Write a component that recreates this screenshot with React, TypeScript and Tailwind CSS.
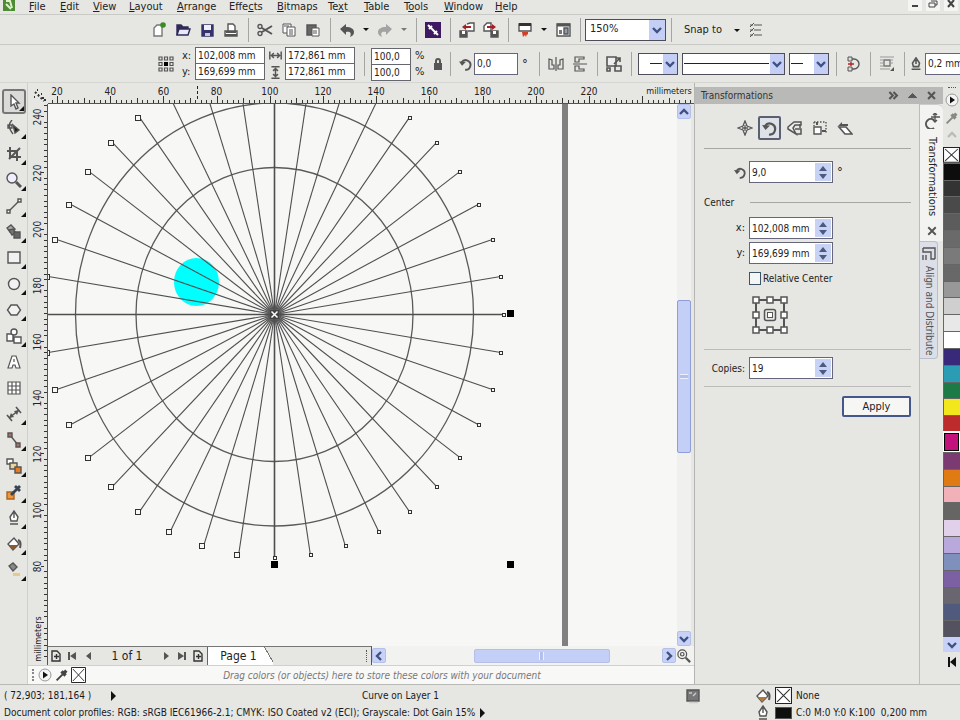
import type { ReactNode } from 'react';

const menus = ['File', 'Edit', 'View', 'Layout', 'Arrange', 'Effects', 'Bitmaps', 'Text', 'Table', 'Tools', 'Window', 'Help'];
const menuWidths = [
  'w-[31px]', 'w-[33px]', 'w-[36px]', 'w-[48px]', 'w-[52px]', 'w-[48px]',
  'w-[51px]', 'w-[36px]', 'w-[40px]', 'w-[40px]', 'w-[51px]', 'w-[30px]',
];
// index of the underlined letter
const menuKeys = [0, 0, 0, 0, 0, 4, 0, 2, 0, 1, 0, 0];

const palette = [
  'bg-[#0d0d0d]', 'bg-[#333333]', 'bg-[#4a4a4a]', 'bg-[#5c5c5c]', 'bg-[#6a6a6a]',
  'bg-[#7a7a7a]', 'bg-[#686868]', 'bg-[#989898]', 'bg-[#cfcfcf]', 'bg-[#e8e8e8]',
  'bg-white', 'bg-[#38297a]', 'bg-[#2a9db4]', 'bg-[#1c7a46]', 'bg-[#f2e61c]',
  'bg-[#bd2b2d]', 'bg-[#c4127c]', 'bg-[#7b3b72]', 'bg-[#e07b14]', 'bg-[#f2b0b8]',
  'bg-[#666564]', 'bg-[#e0d0ea]', 'bg-[#b8a8dc]', 'bg-[#8090bc]', 'bg-[#7c60a4]',
  'bg-[#6a6670]', 'bg-[#505a7c]', 'bg-[#555260]',
];

type IconProps = { children: ReactNode; size?: number; className?: string };

function Icon({ children, size = 16, className = '' }: IconProps) {
  return (
    <svg
      width={size}
      height={size}
      viewBox="0 0 16 16"
      fill="none"
      stroke="#555"
      strokeWidth="1.4"
      className={'shrink-0 ' + className}
      aria-hidden="true"
    >
      {children}
    </svg>
  );
}

function Caret({ color = '#111' }: { color?: string }) {
  return (
    <svg width="6" height="3" viewBox="0 0 6 3" aria-hidden="true">
      <path d="M0 0h6L3 3z" fill={color} />
    </svg>
  );
}

function Chevron({ dir = 'down', color = '#3f5183' }: { dir?: 'down' | 'up' | 'left' | 'right'; color?: string }) {
  const d = {
    down: 'M1 3l4 4 4-4',
    up: 'M1 7l4-4 4 4',
    left: 'M7 1L3 5l4 4',
    right: 'M3 1l4 4-4 4',
  }[dir];
  return (
    <svg width="10" height="10" viewBox="0 0 10 10" aria-hidden="true">
      <path d={d} fill="none" stroke={color} strokeWidth="2.4" />
    </svg>
  );
}

function ToolButton({ label, children }: { label: string; children: ReactNode }) {
  return (
    <button aria-label={label} className="flex h-6 w-6 shrink-0 items-center justify-center">
      {children}
    </button>
  );
}

function DropButton({ label, color }: { label: string; color?: string }) {
  return (
    <button aria-label={label} className="flex h-6 w-[14px] shrink-0 items-center justify-center">
      <Caret color={color} />
    </button>
  );
}

function Sep() {
  return (
    <div className="flex w-[10px] shrink-0 justify-center">
      <div className="h-6 w-px bg-[#a5a5a3]" />
    </div>
  );
}

function RotateIcon({ size = 14 }: { size?: number }) {
  return (
    <Icon size={size}>
      <path d="M3 6a5.500 5.500 0 1 1 4 8.500" strokeWidth="2.200" />
      <path d="M0 5l3.500 5L8 5.500z" fill="#555" stroke="none" />
    </Icon>
  );
}

function MenuBar() {
  return (
    <header className="flex h-[15px] shrink-0 items-start border-b border-[#c9c9c6]">
      <svg width="14" height="11" viewBox="0 0 14 11" className="mr-3 ml-[3px] shrink-0" aria-hidden="true">
        <path d="M0 0h12v11H0z" fill="#4e8b35" />
        <path d="M3 1h4l2 7M3 4l5 5" fill="none" stroke="#dff0cc" strokeWidth="2" />
      </svg>
      <nav className="flex grow text-[11px] leading-[13px]">
        {menus.map((name, i) => (
          <button key={name} className={menuWidths[i] + ' shrink-0 text-left whitespace-nowrap'}>
            {name.slice(0, menuKeys[i])}
            <span className="underline">{name[menuKeys[i]]}</span>
            {name.slice(menuKeys[i] + 1)}
          </button>
        ))}
      </nav>
      <div className="flex shrink-0 gap-1 pr-[2px]">
        <button aria-label="Minimize" className="h-[11px] w-[14px] bg-[#f4f4f2]">
          <svg width="14" height="11"><path d="M4 6h6" stroke="#444" strokeWidth="2" /></svg>
        </button>
        <button aria-label="Restore" className="h-[11px] w-[14px] bg-[#f4f4f2]">
          <svg width="14" height="11"><path d="M3 3h6v4H3zM5 1h6v4H9" fill="none" stroke="#444" strokeWidth="1" /></svg>
        </button>
        <button aria-label="Close" className="h-[11px] w-[14px] bg-[#f4f4f2]">
          <svg width="14" height="11"><path d="M4 0l6 7M10 0L4 7" stroke="#444" strokeWidth="2" /></svg>
        </button>
      </div>
    </header>
  );
}

function StandardBar() {
  return (
    <div className="flex h-[30px] shrink-0 items-center border-b border-[#c9c9c6] pl-[147px]">
      <ToolButton label="New">
        <Icon>
          <path d="M3 14V6l3-3h5v11z" fill="#fff" stroke="#777" />
          <circle cx="12" cy="3" r="2.800" fill="#3c8a22" stroke="none" />
        </Icon>
      </ToolButton>
      <ToolButton label="Open">
        <Icon>
          <path d="M2 13V3h4l2 2h5v2" fill="#2e2b55" stroke="#2e2b55" />
          <path d="M2 13l2-6h11l-2 6z" fill="#e8e8ff" stroke="#2e2b55" />
        </Icon>
      </ToolButton>
      <ToolButton label="Save">
        <Icon>
          <path d="M3 3h11v11H3z" fill="#35336b" stroke="#35336b" />
          <path d="M5 3h7v5H5z" fill="#f0f0fa" stroke="none" />
          <path d="M6 11h5v3H6z" fill="#c8c8da" stroke="none" />
        </Icon>
      </ToolButton>
      <ToolButton label="Print">
        <Icon>
          <path d="M5 10V2h5l2 2v6" fill="#fff" />
          <path d="M2 9h12v5H2z" fill="#fff" />
          <path d="M2 13h12M3 10h10" strokeWidth="2" />
        </Icon>
      </ToolButton>
      <Sep />
      <ToolButton label="Cut">
        <Icon>
          <path d="M5 6l10 6M5 10l10-6" strokeWidth="2" />
          <circle cx="3" cy="4.500" r="2" />
          <circle cx="3" cy="11.500" r="2" />
        </Icon>
      </ToolButton>
      <ToolButton label="Copy">
        <Icon>
          <path d="M2 2h8v9H2z" fill="#fff" strokeWidth="1" />
          <path d="M6 5h8v9H6z" fill="#fff" strokeWidth="1" />
          <path d="M8 8h4M8 10h4M8 12h4M3 4h5" strokeWidth="1" />
        </Icon>
      </ToolButton>
      <ToolButton label="Paste">
        <Icon>
          <path d="M2 3h9v10H2z" fill="#666" />
          <path d="M7 6h7v8H7z" fill="#fff" strokeWidth="1" />
          <path d="M8 9h4M8 11h4" strokeWidth="1" />
        </Icon>
      </ToolButton>
      <Sep />
      <ToolButton label="Undo">
        <Icon>
          <path d="M1 7l6-5v3c5 0 8 2 8 5 0 2-1 4-4 5 2-4 0-6-4-5v3z" fill="#555" stroke="none" />
        </Icon>
      </ToolButton>
      <DropButton label="Undo list" />
      <ToolButton label="Redo">
        <Icon>
          <path d="M15 7L9 2v3C4 5 1 7 1 10c0 2 1 4 4 5-2-4 0-6 4-5v3z" fill="#a3a3a3" stroke="none" />
        </Icon>
      </ToolButton>
      <DropButton label="Redo list" color="#777" />
      <Sep />
      <ToolButton label="Search content">
        <Icon>
          <path d="M0 0h16v16H0z" fill="#3f1a63" stroke="none" />
          <path d="M3 3l10 10M4 7l3-3M9 12l3-3" stroke="#fff" strokeWidth="2" />
        </Icon>
      </ToolButton>
      <Sep />
      <ToolButton label="Import">
        <Icon>
          <path d="M8 2l3-1h4v8H9" fill="#fff" />
          <path d="M1 9h7v6H1z" fill="#555" />
          <path d="M3 9h3v3H3z" fill="#fff" stroke="none" />
          <path d="M12 5H6" stroke="#a31f26" strokeWidth="2" />
          <path d="M7 2v6L3 5z" fill="#a31f26" stroke="none" />
        </Icon>
      </ToolButton>
      <ToolButton label="Export">
        <Icon>
          <path d="M1 9V4l3-3h4v8z" fill="#fff" />
          <path d="M8 9h7v6H8z" fill="#555" />
          <path d="M10 9h3v3h-3z" fill="#fff" stroke="none" />
          <path d="M4 5h6" stroke="#a31f26" strokeWidth="2" />
          <path d="M9 2v6l4-3z" fill="#a31f26" stroke="none" />
        </Icon>
      </ToolButton>
      <Sep />
      <ToolButton label="Application launcher">
        <Icon>
          <path d="M2 2h12v7H2z" fill="#fff" />
          <path d="M2 1h12v3H2z" fill="#333" stroke="none" />
          <path d="M5 10h6v3l-1-1-1 3-1-2-2 2z" fill="#d33f22" stroke="none" />
        </Icon>
      </ToolButton>
      <DropButton label="Launcher list" />
      <ToolButton label="Welcome screen">
        <Icon>
          <path d="M2 2h13v12H2z" fill="#fff" />
          <path d="M2 3h13" strokeWidth="3" />
          <path d="M4 8h3v4H4z" fill="#777" stroke="none" />
          <path d="M9 6h4v6H9z" fill="#8a9ab8" />
        </Icon>
      </ToolButton>
      <Sep />
      <div className="relative h-[22px] w-[81px] shrink-0">
        <select
          aria-label="Zoom level"
          className="block h-full w-full appearance-none border border-[#4d4d5c] bg-white pl-1 text-[11px] text-[#222]"
        >
          <option>150%</option>
        </select>
        <span className="pointer-events-none absolute top-px right-px flex h-5 w-4 items-center justify-center bg-[#c5cff5]">
          <Chevron />
        </span>
      </div>
      <Sep />
      <button className="ml-2 flex shrink-0 items-center gap-3 pt-px text-[11px] leading-4">
        Snap to <Caret />
      </button>
      <button aria-label="Options" className="ml-2 shrink-0">
        <Icon>
          <path d="M6 3h8M6 8h7M6 13h8M2 5l4-4M2 10l4-4M2 15l4-4M2 3h3M2 8h3M2 13h3" strokeWidth="1" />
        </Icon>
      </button>
    </div>
  );
}

const field = 'h-[17px] border border-[#66666e] bg-white px-[2px] text-[10px] text-[#222] outline-none';

function LinePicker({ label, width, inset }: { label: string; width: string; inset: string }) {
  return (
    <div className={'relative h-[22px] shrink-0 ' + width}>
      <select aria-label={label} className="block h-full w-full appearance-none border border-[#4d4d5c] bg-white" />
      <span className={'pointer-events-none absolute top-[10px] h-px bg-[#222] ' + inset} />
      <span className="pointer-events-none absolute top-px right-px flex h-5 w-[14px] items-center justify-center bg-[#c5cff5]">
        <Chevron />
      </span>
    </div>
  );
}

function PropertyBar() {
  return (
    <div className="flex h-[38px] shrink-0 items-center border-b border-[#d5d5d2] pl-[158px]">
      <Icon>
        <path d="M1 1h3v3H1zM6.500 1h3v3h-3zM12 1h3v3h-3zM1 6.500h3v3H1zM12 6.500h3v3h-3zM1 12h3v3H1zM6.500 12h3v3h-3zM12 12h3v3h-3z" strokeWidth="1.200" />
        <path d="M6 6h4v4H6z" fill="#000" stroke="none" />
      </Icon>
      <div className="ml-2 grid shrink-0 grid-cols-[13px_70px] items-center -space-y-px text-[11px] leading-4">
        <label htmlFor="pos-x">x:</label>
        <input id="pos-x" className={field} defaultValue="102,008 mm" />
        <label htmlFor="pos-y">y:</label>
        <input id="pos-y" className={field} defaultValue="169,699 mm" />
      </div>
      <div className="ml-1 grid shrink-0 grid-cols-[16px_70px] items-center -space-y-px">
        <Icon size={13}>
          <path d="M1 3v10M15 3v10M3 8h10M6 5L3 8l3 3M10 5l3 3-3 3" strokeWidth="1.800" />
        </Icon>
        <input aria-label="Width" className={field} defaultValue="172,861 mm" />
        <Icon size={13}>
          <path d="M3 1h10M3 15h10M8 3v10M5 6l3-3 3 3M5 10l3 3 3-3" strokeWidth="1.800" />
        </Icon>
        <input aria-label="Height" className={field} defaultValue="172,861 mm" />
      </div>
      <div className="ml-1"><Sep /></div>
      <div className="ml-[2px] grid shrink-0 grid-cols-[40px_14px] items-center gap-x-1 -space-y-px text-[11px] leading-4">
        <input aria-label="Scale horizontal" className={field} defaultValue="100,0" />
        <span>%</span>
        <input aria-label="Scale vertical" className={field} defaultValue="100,0" />
        <span>%</span>
      </div>
      <button aria-label="Lock ratio" className="ml-1 shrink-0">
        <svg width="10" height="12" viewBox="0 0 10 12">
          <path d="M1 5h8v7H1z" fill="#555" />
          <path d="M3 5V3a2 2 0 0 1 4 0v2" fill="none" stroke="#555" strokeWidth="2" />
        </svg>
      </button>
      <div className="ml-[2px]"><Sep /></div>
      <label htmlFor="angle" className="ml-1 shrink-0"><RotateIcon /></label>
      <input
        id="angle"
        aria-label="Angle of rotation"
        className="ml-px h-[22px] w-11 shrink-0 border border-[#66667a] bg-white px-[2px] text-[10px] text-[#222]"
        defaultValue="0,0"
      />
      <span className="ml-1 w-3 shrink-0 text-[13px] leading-4">°</span>
      <Sep />
      <ToolButton label="Mirror horizontally">
        <Icon>
          <path d="M1 3v10h5V9H4V4zM15 3v10h-5V9h2V4zM8 1v14" strokeWidth="1.200" />
        </Icon>
      </ToolButton>
      <ToolButton label="Mirror vertically">
        <Icon>
          <path d="M3 1h9v2H7v3H3zM3 15h9v-2H7v-3H3zM1 8h14" strokeWidth="1.200" />
        </Icon>
      </ToolButton>
      <Sep />
      <ToolButton label="Convert to curves">
        <Icon>
          <path d="M1 1h9v9H1z" fill="#eee" strokeWidth="1.600" />
          <path d="M1 12h3v3H1zM9 10h6v5H9zM8 8l6-6M10 2h4v4" strokeWidth="1.600" />
        </Icon>
      </ToolButton>
      <Sep />
      <div className="ml-[2px] flex shrink-0 gap-1">
        <LinePicker label="Start arrowhead" width="w-10" inset="right-4 w-3" />
        <LinePicker label="Line style" width="w-[103px]" inset="right-4 left-[2px]" />
        <LinePicker label="End arrowhead" width="w-10" inset="left-[2px] w-3" />
      </div>
      <div className="ml-[2px]"><Sep /></div>
      <ToolButton label="Close curve">
        <Icon>
          <path d="M4 3h5a5 5 0 0 1 0 10H4" strokeWidth="1.400" />
          <path d="M3 1h4v4H3zM3 11h4v4H3z" fill="#ddd" strokeWidth="1" />
          <path d="M3 8h6M6 6v4" stroke="#b22" />
        </Icon>
      </ToolButton>
      <Sep />
      <ToolButton label="Wrap text">
        <Icon>
          <path d="M1 1h14M1 4h3M1 7h3M1 10h3M1 13h10M12 4h2M12 7h2" stroke="#999" strokeWidth="1" />
          <path d="M5 4h6v6H5z" stroke="#777" />
          <path d="M11 15l4-4v4z" fill="#555" stroke="none" />
        </Icon>
      </ToolButton>
      <Sep />
      <label htmlFor="outline" className="mr-[2px] shrink-0">
        <Icon size={14}>
          <path d="M3 14h10M5 11h6l1-4-4-6-4 6zM8 3v5" strokeWidth="1.800" />
        </Icon>
      </label>
      <input
        id="outline"
        aria-label="Outline width"
        className="h-[22px] w-0 grow border border-r-0 border-[#66667a] bg-white pl-[2px] text-[10px] text-[#222]"
        defaultValue="0,2 mm"
      />
    </div>
  );
}

const tools: { name: string; flyout: boolean; art: ReactNode }[] = [
  { name: 'Pick', flyout: true, art: <path d="M5 1v11l3-2 2 5 2-1-2-5h3z" fill="#fff" /> },
  { name: 'Shape', flyout: true, art: <><path d="M6 0c-4 4-3 9 1 14M2 5h4v3H2z" /><path d="M7 5l6 5-4 3z" fill="#222" /></> },
  { name: 'Crop', flyout: true, art: <path d="M4 1v10h11M1 5h10v10M3 13L14 2" strokeWidth="2" /> },
  { name: 'Zoom', flyout: true, art: <><circle cx="6" cy="6" r="5" fill="#eef" /><path d="M10 10l5 5" strokeWidth="3" /></> },
  { name: 'Freehand', flyout: true, art: <><path d="M3 13L13 3" /><path d="M1 12h3v3H1zM12 1h3v3h-3z" fill="#fff" /></> },
  { name: 'Smart fill', flyout: true, art: <><path d="M1 4l4-3 4 4-5 3z" fill="#aaa" /><path d="M3 6l4-1 3 4-4 2z" fill="#777" /><path d="M8 8h6v6H8z" fill="#666" /></> },
  { name: 'Rectangle', flyout: true, art: <path d="M2 2h12v11H2z" fill="#f2f2f2" /> },
  { name: 'Ellipse', flyout: true, art: <circle cx="8" cy="8" r="5.500" fill="#f2f2f2" /> },
  { name: 'Polygon', flyout: true, art: <path d="M5 3h6l3.500 5L11 13H5L1.500 8z" fill="#f2f2f2" /> },
  { name: 'Basic shapes', flyout: true, art: <><path d="M1 6h6v7H1zM8 9h7v6H8z" fill="#fff" /><circle cx="8" cy="4" r="3" fill="#fff" /></> },
  { name: 'Text', flyout: false, art: <path d="M2 14L6 2h4l4 12h-4l-1-3H7l-1 3zM8 5v3" fill="#fff" strokeWidth="1.200" /> },
  { name: 'Table', flyout: false, art: <path d="M2 2h12v12H2zM2 6h12M2 10h12M6 2v12M10 2v12" fill="#fff" strokeWidth="1.200" /> },
  { name: 'Dimension', flyout: true, art: <><path d="M3 12l10-8M1 9l5 6M10 1l5 6" strokeWidth="1.600" /><path d="M3 12l2-5 3 4zM13 4l-2 5-3-4z" fill="#555" stroke="none" /></> },
  { name: 'Connector', flyout: true, art: <><path d="M4 3l8 10" /><path d="M2 1h4v4H2zM10 11h4v4h-4z" fill="#b86a5c" /></> },
  { name: 'Blend', flyout: true, art: <><path d="M1 1h6v5H1z" fill="#fff" /><path d="M4 5h7v6H4z" fill="#ecd59a" /><path d="M9 9h6v6H9z" fill="#ec7a18" /></> },
  { name: 'Eyedropper', flyout: true, art: <><path d="M1 8h7v7H1z" fill="#f0963c" stroke="#a96420" /><path d="M5 11l9-9M9 2l5 5" stroke="#3a4350" strokeWidth="2.800" /></> },
  { name: 'Outline', flyout: true, art: <path d="M4 14h8M5 11h6l1-4-4-6-4 6zM8 3v5" fill="#fff" /> },
  { name: 'Fill', flyout: true, art: <><path d="M2 8l6-6 5 6-6 6z" fill="#fff" /><path d="M3 9h9l-5 5z" fill="#8c5b2b" stroke="none" /><path d="M12 4c3 1 3 4 2 8" strokeWidth="2" /></> },
  { name: 'Interactive fill', flyout: true, art: <><path d="M3 4l4-3 4 4-4 4z" fill="#888" /><path d="M7 11h7v3H7z" fill="#e6cb87" stroke="none" /></> },
];

function Toolbox() {
  return (
    <aside className="flex w-7 shrink-0 flex-col items-center border-r border-[#cfcfcc] pt-[6px]">
      {tools.map((tool) => (
        <button
          key={tool.name}
          aria-label={tool.name}
          className={
            'relative flex h-[25px] w-6 shrink-0 items-center justify-center mb-px ' +
            (tool.name === 'Pick' ? 'rounded-[3px] border-2 border-[#777] bg-[#dadad9]' : '')
          }
        >
          <Icon>{tool.art}</Icon>
          {tool.flyout && (
            <svg width="5" height="5" className="absolute right-0 bottom-px" aria-hidden="true">
              <path d="M5 0v5H0z" fill="#111" />
            </svg>
          )}
        </button>
      ))}
    </aside>
  );
}

// Ruler scales: 20 mm are 53.2px across and 56.2px down at this zoom.
const hMajor = 53.2;
const vMajor = 56.2;

function HorizontalRuler() {
  const ticks = Array.from({ length: 121 }, (_, i) => i);
  return (
    <svg className="block h-[21px] w-full shrink-0" aria-hidden="true">
      <path d="M9 7h1M13 11h1M10 12h1M6 14h1M14 15h3v3M7 9l9 9" stroke="#333" strokeWidth="2" strokeDasharray="2 2" fill="none" />
      {ticks.map((i) => {
        const x = Math.round(29 + ((i - 1) * hMajor) / 10) + 0.5;
        const top = (i - 1) % 10 === 0 ? 13 : (i - 1) % 5 === 0 ? 15 : 17;
        return x < 20 ? null : <path key={i} d={`M${x} ${top}V20`} stroke="#333" />;
      })}
      {Array.from({ length: 11 }, (_, i) => (
        <text key={i} x={29 + i * hMajor} y="12" textAnchor="middle" fontSize="10" fill="#222">
          {20 + i * 20}
        </text>
      ))}
      <path d="M169.500 3v14" stroke="#222" strokeDasharray="3 2" />
      <path d="M20 20.500H680" stroke="#555" />
      <text x="641" y="11" textAnchor="middle" fontSize="9" fill="#222">millimeters</text>
    </svg>
  );
}

function VerticalRuler() {
  return (
    <svg className="block h-full w-[20px] shrink-0" aria-hidden="true">
      {Array.from({ length: 99 }, (_, i) => {
        const y = Math.round(1 + i * (vMajor / 10)) + 0.5;
        return <path key={i} d={`M${i % 10 === 2 ? 13 : 16} ${y}h3`} stroke="#333" />;
      })}
      {Array.from({ length: 9 }, (_, i) => {
        const y = 13 + i * vMajor;
        return (
          <text key={i} x="0" y="0" transform={`translate(13 ${y}) rotate(-90)`} textAnchor="middle" fontSize="10" fill="#222">
            {240 - i * 20}
          </text>
        );
      })}
      <text x="0" y="0" transform="translate(13 535) rotate(-90)" textAnchor="middle" fontSize="9" fill="#222">
        millimeters
      </text>
      <path d="M19.500 0V700" stroke="#555" />
    </svg>
  );
}

// Drawing centre and the reach of one spoke, in canvas pixels.
const cx = 226.5;
const cy = 210.5;
const spokes = Array.from({ length: 40 }, (_, i) => {
  const a = (i * 9 * Math.PI) / 180;
  return { x: cx + 229 * Math.cos(a), y: cy + 243 * Math.sin(a) };
});

function Drawing() {
  return (
    <svg className="absolute inset-0 h-full w-full" role="img" aria-label="Page with a wheel of rotated lines">
      <rect x="514" y="0" width="6" height="100%" fill="#808080" />
      <ellipse cx="148.500" cy="178" rx="22.500" ry="24" fill="#00ffff" />
      <g fill="none" stroke="#5a5a5a" strokeWidth="1.300">
        <ellipse cx={cx} cy={cy} rx="199" ry="211.500" />
        <ellipse cx={cx} cy={cy} rx="138.500" ry="147" />
      </g>
      {spokes.map((p, i) => (
        <path key={i} d={`M${cx} ${cy}L${p.x} ${p.y}`} stroke="#4f4f4f" strokeWidth={i % 10 === 0 ? 1.6 : 1.1} />
      ))}
      {spokes.map((p, i) => {
        // handles left of the centre hang off the outer side of the line end
        const left = p.x < cx - 10;
        const s = left ? 5 : 3;
        return (
          <rect
            key={i}
            x={Math.round(p.x - s / 2) + (left ? -1.5 : 0.5)}
            y={Math.round(p.y - s / 2) + 0.5}
            width={s}
            height={s}
            fill="#f8f8f7"
            stroke="#333"
          />
        );
      })}
      <circle cx={cx} cy={cy} r="10" fill="#555" fillOpacity="0.4" />
      <rect x="222" y="206" width="9" height="9" fill="#444" />
      <path d="M223.500 207.500l6 6M229.500 207.500l-6 6" stroke="#fff" strokeWidth="1.500" />
      <path d="M459 206h7v7h-7zM223 457h7v7h-7zM459 457h7v7h-7z" fill="#000" />
    </svg>
  );
}

function ScrollButton({ label, dir }: { label: string; dir: 'down' | 'up' | 'left' | 'right' }) {
  return (
    <button aria-label={label} className="flex h-[15px] w-[14px] shrink-0 items-center justify-center rounded-xs border border-[#b4c0ea] bg-[#c8d2f6]">
      <Chevron dir={dir} />
    </button>
  );
}

function NavIcon({ label, d, fill = true }: { label: string; d: string; fill?: boolean }) {
  return (
    <button aria-label={label} className="flex w-4 shrink-0 justify-center">
      <svg width="10" height="12" viewBox="0 0 10 12">
        <path d={d} fill={fill ? '#555' : 'none'} stroke={fill ? 'none' : '#333'} strokeWidth="1.400" />
      </svg>
    </button>
  );
}

const addPage = 'M1 1h5l3 3v7H1zM3 6.500h5M5.500 4v5';

function PageBar() {
  return (
    <div className="flex h-[19px] shrink-0 items-center bg-[#f2f2f1]">
      <div className="flex h-full grow items-center border-t border-[#777] bg-[#e6e6e3]">
        <NavIcon label="Add page before" d={addPage} fill={false} />
        <NavIcon label="First page" d="M1 2h2v8H1zM9 2v8L3 6z" />
        <NavIcon label="Previous page" d="M8 2v8L3 6z" />
        <span className="w-[62px] shrink-0 text-center text-[12px]">1 of 1</span>
        <NavIcon label="Next page" d="M3 2v8l5-4z" />
        <NavIcon label="Last page" d="M7 2h2v8H7zM1 2v8l6-4z" />
        <NavIcon label="Add page after" d={addPage} fill={false} />
        <button className="ml-px h-full w-[66px] shrink-0 border-l border-[#666] bg-[linear-gradient(240deg,#e6e6e3_7px,#777_7px,#777_8px,white_8px)] pr-1 text-[12px]">
          Page 1
        </button>
        <div className="grow" />
        <div className="mr-1 h-3 w-px border-l border-dotted border-[#555]" />
      </div>
      <div className="flex h-full w-[305px] shrink-0 items-center border-l border-[#555]">
        <ScrollButton label="Scroll left" dir="left" />
        <div className="flex h-full grow items-center">
          <div className="ml-[32%] flex h-[14px] w-[49%] items-center justify-center rounded-xs border border-[#b4c0ea] bg-[#c3cff7]">
            <div className="h-2 w-[5px] border-x border-[#eef] bg-[#b3c0ee]" />
          </div>
        </div>
        <ScrollButton label="Scroll right" dir="right" />
      </div>
      <button aria-label="Navigator" className="mr-[2px] flex w-4 shrink-0 justify-center">
        <Icon size={14}>
          <circle cx="6" cy="6" r="5" />
          <circle cx="6" cy="6" r="2" />
          <path d="M10 10l5 5" strokeWidth="2.500" />
        </Icon>
      </button>
    </div>
  );
}

function PlayDisc() {
  return (
    <svg width="14" height="14" viewBox="0 0 14 14" className="shrink-0" aria-hidden="true">
      <circle cx="7" cy="7" r="6" fill="#f4f4f4" stroke="#999" />
      <path d="M5 3.500v7L10 7z" fill="#111" />
    </svg>
  );
}

function DropperIcon({ color = '#444' }: { color?: string }) {
  return (
    <Icon size={13}>
      <path d="M2 14l8-8" stroke={color} strokeWidth="2.500" />
      <path d="M8 3l5 5M10 6l4-4" stroke={color} strokeWidth="4" />
    </Icon>
  );
}

function NoColor({ className = '' }: { className?: string }) {
  return (
    <svg viewBox="0 0 16 16" preserveAspectRatio="none" className={'block shrink-0 ' + className} aria-hidden="true">
      <path d="M.5.5h15v15H.5z" fill="#fff" stroke="#222" />
      <path d="M2 2l12 12M14 2L2 14" stroke="#333" />
    </svg>
  );
}

function Workspace() {
  return (
    <main className="flex min-w-0 grow flex-col border-r border-[#b5b5b3]">
      <HorizontalRuler />
      <div className="flex min-h-0 grow">
        <VerticalRuler />
        <div className="flex min-w-0 grow flex-col">
          <div className="flex min-h-0 grow">
            <div className="relative min-w-0 grow overflow-hidden bg-[#f7f7f6]">
              <Drawing />
            </div>
            <div className="flex w-[14px] shrink-0 flex-col bg-[#f0f0ef]">
              <ScrollButton label="Scroll up" dir="up" />
              <div className="grow pt-[181px]">
                <div className="flex h-[153px] items-center justify-center rounded-xs border border-[#8f9ed6] bg-[#c3cff7]">
                  <div className="h-[5px] w-2 border-y border-[#eef] bg-[#b3c0ee]" />
                </div>
              </div>
              <ScrollButton label="Scroll down" dir="down" />
            </div>
            <div className="w-[3px] bg-[#e6e6e3]" />
          </div>
          <PageBar />
        </div>
      </div>
      <div className="flex h-[19px] shrink-0 items-center border-t border-[#d0d0ce] bg-[#f8f8f7] pl-1">
        <div className="h-3 border-l-2 border-dotted border-[#888]" />
        <button aria-label="Document palette menu" className="ml-1"><PlayDisc /></button>
        <button aria-label="Pick color" className="mx-[3px]"><DropperIcon /></button>
        <NoColor className="h-4 w-[15px]" />
        <p className="grow pr-4 text-center text-[10px] text-[#777] italic">
          Drag colors (or objects) here to store these colors with your document
        </p>
      </div>
    </main>
  );
}

function Spinner({ id, value }: { id: string; value: string }) {
  return (
    <div className="flex h-[22px] w-[84px] border border-[#66667a] bg-white p-px">
      <input id={id} className="w-0 grow bg-transparent pl-px text-[10px] text-[#222] outline-none" defaultValue={value} />
      <div className="flex w-4 shrink-0 flex-col items-center justify-center bg-[#c8d2f4]">
        <button type="button" aria-label={'Increase ' + id} className="flex h-2 items-center">
          <svg width="8" height="5"><path d="M4 0l4 5H0z" fill="#4c5a80" /></svg>
        </button>
        <button type="button" aria-label={'Decrease ' + id} className="flex h-2 items-center">
          <svg width="8" height="5"><path d="M4 5l4-5H0z" fill="#4c5a80" /></svg>
        </button>
      </div>
    </div>
  );
}

const modes: { name: string; art: ReactNode }[] = [
  { name: 'Position', art: <path d="M8 1l2 5 5 2-5 2-2 5-2-5-5-2 5-2zM8 5v6M5 8h6" fill="#fff" strokeWidth="1.300" /> },
  { name: 'Rotate', art: <><path d="M3 6a5.500 5.500 0 1 1 4 8.500" strokeWidth="2.200" /><path d="M0 5l3.500 5L8 5.500z" fill="#555" stroke="none" /></> },
  { name: 'Scale and mirror', art: <><path d="M1 7l6-5h7v3H8L6 8l3 6L1 9z" fill="#eee" strokeWidth="1.500" /><path d="M8 9h6v5H9M13 4v4" strokeWidth="1.500" /></> },
  { name: 'Size', art: <><path d="M2 7h7v7H2z" fill="#fff" /><path d="M2 2h12v12M2 2v4" strokeDasharray="1.500 1.500" /><path d="M10 11h4M5 2v3" strokeWidth="2" /></> },
  { name: 'Skew', art: <><path d="M2 7h7l6 7H8z" fill="#fff" strokeWidth="1.600" /><path d="M1 6l4-4v2h6v2z" fill="#555" stroke="none" /></> },
];

function Transformations() {
  return (
    <section className="flex w-[248px] shrink-0 flex-col pt-1">
      <div className="flex h-[17px] shrink-0 items-center bg-[#b9b9b8] px-[6px] text-[#333]">
        <h2 className="grow text-[10px]">Transformations</h2>
        <div className="flex gap-2">
          <button aria-label="Collapse"><Icon size={11}><path d="M2 3l5 5-5 5M8 3l5 5-5 5" strokeWidth="3" /></Icon></button>
          <button aria-label="Roll up"><Icon size={11}><path d="M2 11l6-6 6 6z" fill="#555" /></Icon></button>
          <button aria-label="Close docker"><Icon size={11}><path d="M3 3l10 10M13 3L3 13" strokeWidth="3" /></Icon></button>
        </div>
      </div>
      <div className="flex grow">
        <form className="w-[225px] shrink-0 border-r border-[#bcbcba] pr-2 pl-[9px] text-[10px] text-[#222]">
          <div className="flex h-[45px] items-center border-b border-[#a6a6a4] pt-1 pl-7">
            {modes.map((mode) => (
              <button
                key={mode.name}
                type="button"
                aria-label={mode.name}
                className={
                  'flex h-6 items-center justify-center ' +
                  (mode.name === 'Rotate' ? 'w-[23px] mx-px rounded-xs border-2 border-[#5a6072] bg-[#dfe1e8]' : 'w-[25px]')
                }
              >
                <Icon>{mode.art}</Icon>
              </button>
            ))}
          </div>
          <div className="mt-3 flex items-center">
            <label htmlFor="rotation" aria-label="Rotation angle" className="flex w-[45px] justify-end pr-[2px]">
              <RotateIcon size={13} />
            </label>
            <Spinner id="rotation" value="9,0" />
            <span className="ml-1 text-[13px] leading-4">°</span>
          </div>
          <h3 className="mt-[11px] flex h-4 items-center gap-4 text-[10px]">
            Center <span className="h-px grow bg-[#a6a6a4]" />
          </h3>
          <div className="mt-[7px] flex items-center">
            <label htmlFor="center-x" className="w-[45px] pr-1 text-right text-[11px]">x:</label>
            <Spinner id="center-x" value="102,008 mm" />
          </div>
          <div className="mt-[3px] flex items-center">
            <label htmlFor="center-y" className="w-[45px] pr-1 text-right text-[11px]">y:</label>
            <Spinner id="center-y" value="169,699 mm" />
          </div>
          <div className="mt-2 ml-[45px] flex h-[13px] items-center gap-[2px]">
            <input id="relative" type="checkbox" className="h-[13px] w-3 appearance-none border border-[#3d5468] bg-[#f4f6f5]" />
            <label htmlFor="relative" className="whitespace-nowrap">Relative Center</label>
          </div>
          <button type="button" aria-label="Anchor point" className="mt-[11px] ml-12 block">
            <svg width="36" height="38" viewBox="0 0 36 38" fill="none" stroke="#555">
              <path d="M4 4h28v30H4z" strokeWidth="2" />
              <path
                d="M1 1h6v6H1zM15 1h6v6h-6zM29 1h6v6h-6zM1 16h6v6H1zM29 16h6v6h-6zM1 31h6v6H1zM15 31h6v6h-6zM29 31h6v6h-6z"
                fill="#fff"
                strokeWidth="1.500"
              />
              <rect x="12.500" y="13.500" width="11" height="11" rx="2" strokeWidth="1.500" />
              <rect x="15.500" y="16.500" width="5" height="5" fill="#fff" />
            </svg>
          </button>
          <div className="mt-[15px] flex h-[38px] items-center border-y border-[#bbbbb9]">
            <label htmlFor="copies" className="w-[45px] pr-1 text-right whitespace-nowrap">Copies:</label>
            <Spinner id="copies" value="19" />
          </div>
          <div className="mt-[9px] flex justify-end">
            <button type="button" className="h-[21px] w-[69px] rounded-xs border-2 border-[#44568c] bg-[#f6f6f5] text-[11px] leading-4">
              Apply
            </button>
          </div>
        </form>
        <div className="flex grow flex-col items-stretch text-[10px]">
          <button className="flex h-[137px] shrink-0 flex-col items-center gap-1 rounded-tr-md border-t border-[#ccc] bg-[#f3f3f1] pt-2 pb-1">
            <Icon>
              <path d="M10 15a5 5 0 1 1 0-8" strokeWidth="2" />
              <path d="M11 0v9M7 4h9M9 2l2-2 2 2M9 7l2 2 2-2" strokeWidth="1.400" />
            </Icon>
            <span className="grow text-[11px] leading-4 [writing-mode:vertical-rl]">Transformations</span>
            <Icon size={12}><path d="M3 3l10 10M13 3L3 13" strokeWidth="2.500" /></Icon>
          </button>
          <button className="mr-[5px] flex h-[118px] shrink-0 flex-col items-center gap-1 rounded-r-sm border border-l-0 border-[#b9bfcc] bg-[#dcdfe8] pt-1 text-[#555]">
            <Icon><path d="M2 2h12v11M2 2v4h8v7h4M5 9v5M2 9v5" strokeWidth="1.400" /></Icon>
            <span className="leading-4 whitespace-nowrap [writing-mode:vertical-rl]">Align and Distribute</span>
          </button>
        </div>
      </div>
    </section>
  );
}

function ColorPalette() {
  return (
    <aside className="flex w-[17px] shrink-0 flex-col overflow-hidden pb-[12px]">
      <div className="flex h-[64px] shrink-0 flex-col items-center gap-[5px] pt-1">
        <div className="h-px w-2 border-t border-dotted border-[#555]" />
        <button aria-label="Palette menu"><PlayDisc /></button>
        <button aria-label="Palette eyedropper"><DropperIcon color="#888" /></button>
        <button aria-label="Scroll palette up"><Chevron dir="up" color="#bbb" /></button>
      </div>
      <button aria-label="No color" className="min-h-0 flex-1"><NoColor className="h-full w-full" /></button>
      {palette.map((color) => (
        <button
          key={color}
          aria-label="Color swatch"
          className={
            'min-h-0 w-full flex-1 ' +
            color +
            (color === 'bg-[#c4127c]' ? ' border-2 border-black outline-2 -outline-offset-1 outline-white' : ' border-t border-l border-[#666]')
          }
        />
      ))}
      <button aria-label="Scroll palette down" className="flex h-[15px] shrink-0 items-center justify-center bg-[#c8d2f6]">
        <Chevron />
      </button>
      <button aria-label="Expand palette" className="flex h-5 shrink-0 items-center justify-center">
        <svg width="8" height="10"><path d="M0 0h2v10H0zM8 0v10L2 5z" fill="#111" /></svg>
      </button>
    </aside>
  );
}

function StatusBar() {
  return (
    <footer className="h-9 shrink-0 border-t border-[#b9b9b7] text-[10px] leading-3 whitespace-nowrap text-[#1a1a1a]">
      <div className="flex h-[21px] items-center pl-1">
        <span className="w-[106px]">( 72,903; 181,164 )</span>
        <svg width="6" height="10"><path d="M1 0v10l5-5z" fill="#111" /></svg>
        <span className="grow text-center">Curve on Layer 1</span>
        <Icon className="mr-[54px]">
          <path d="M2 2h12v11H2z" fill="#777" />
          <path d="M4 5h3M8 8l3-3M4 14.500h9" stroke="#ccc" />
        </Icon>
        <div className="flex w-[205px] shrink-0 items-center gap-1">
          <Icon>
            <path d="M2 8l6-6 5 6-6 6z" fill="#fff" />
            <path d="M3 9h9l-5 5z" fill="#b5793c" stroke="none" />
            <path d="M12 4c3 1 3 4 2 8" strokeWidth="2" />
          </Icon>
          <NoColor className="h-[17px] w-[17px]" />
          <span>None</span>
        </div>
      </div>
      <div className="flex h-[14px] items-center pl-1">
        <span>Document color profiles: RGB: sRGB IEC61966-2.1; CMYK: ISO Coated v2 (ECI); Grayscale: Dot Gain 15%</span>
        <svg width="6" height="10" className="ml-1"><path d="M1 0v10l5-5z" fill="#111" /></svg>
        <div className="grow" />
        <div className="flex w-[205px] shrink-0 items-center gap-1">
          <Icon><path d="M4 14h8M5 11h6l1-4-4-6-4 6zM8 3v5" fill="#fff" /></Icon>
          <div className="h-3 w-[17px] border border-[#555] bg-[#0f0f0f]" />
          <span>C:0 M:0 Y:0 K:100&nbsp; 0,200 mm</span>
        </div>
      </div>
    </footer>
  );
}

export default function App() {
  return (
    <div className="flex h-screen flex-col overflow-hidden bg-[#e6e6e3] font-['DejaVu_Sans_Condensed','Noto_Sans',sans-serif] text-[#222]">
      <MenuBar />
      <StandardBar />
      <PropertyBar />
      <div className="flex min-h-0 grow">
        <Toolbox />
        <Workspace />
        <Transformations />
        <ColorPalette />
      </div>
      <StatusBar />
    </div>
  );
}
